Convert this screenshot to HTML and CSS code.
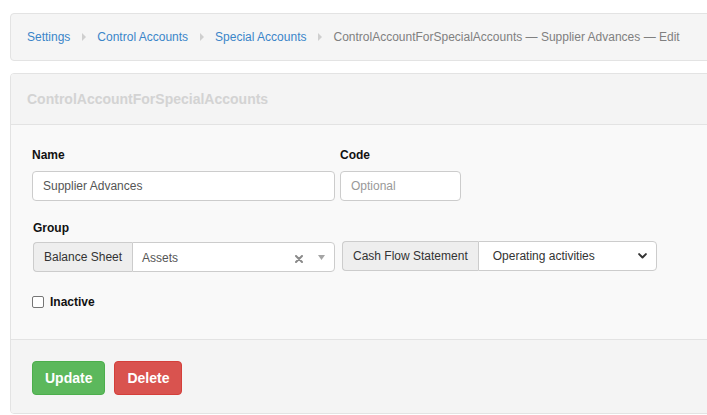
FILE: index.html
```html
<!DOCTYPE html>
<html>
<head>
<meta charset="utf-8">
<link rel="stylesheet" href="styles.css">
</head>
<body>
<div class="page">
  <nav class="breadcrumb">
    <a class="crumb-link">Settings</a>
    <span class="sep"></span>
    <a class="crumb-link">Control Accounts</a>
    <span class="sep"></span>
    <a class="crumb-link">Special Accounts</a>
    <span class="sep"></span>
    <span class="crumb-current">ControlAccountForSpecialAccounts — Supplier Advances — Edit</span>
  </nav>

  <section class="panel">
    <div class="panel-heading">ControlAccountForSpecialAccounts</div>
    <div class="panel-body">
      <div class="row row-top">
        <div class="field field-name">
          <label class="label">Name</label>
          <div class="input">Supplier Advances</div>
        </div>
        <div class="field field-code">
          <label class="label">Code</label>
          <div class="input placeholder">Optional</div>
        </div>
      </div>

      <label class="label label-group">Group</label>
      <div class="row row-groups">
        <div class="input-group group-bs">
          <span class="addon">Balance Sheet</span>
          <div class="select select-assets">
            <span class="select-text">Assets</span>
            <span class="clear">
              <svg width="8" height="8" viewBox="0 0 8 8"><path d="M1 1 L7 7 M7 1 L1 7" stroke="#8a8a8a" stroke-width="2" stroke-linecap="round"/></svg>
            </span>
            <span class="caret">
              <svg width="7" height="5" viewBox="0 0 7 5"><path d="M0 0 H7 L3.5 5 Z" fill="#a5a5a5"/></svg>
            </span>
          </div>
        </div>
        <div class="input-group group-cf">
          <span class="addon">Cash Flow Statement</span>
          <div class="select select-cf">
            <span class="select-text">Operating activities</span>
            <span class="chevron">
              <svg width="9" height="6" viewBox="0 0 9 6"><path d="M1.1 1.1 L4.5 4.5 L7.9 1.1" stroke="#333" stroke-width="2" fill="none" stroke-linecap="round" stroke-linejoin="round"/></svg>
            </span>
          </div>
        </div>
      </div>

      <div class="check-row">
        <span class="checkbox"></span>
        <span class="check-label">Inactive</span>
      </div>
    </div>
    <div class="panel-footer">
      <button class="btn btn-success">Update</button>
      <button class="btn btn-danger">Delete</button>
    </div>
  </section>
</div>
</body>
</html>
```

FILE: styles.css
```css
html, body {
  margin: 0;
  padding: 0;
  overflow: hidden;
  background: #ffffff;
}

body {
  font-family: "Liberation Sans", Arial, sans-serif;
  font-size: 12px;
  color: #333;
}

.page {
  padding: 13px 0 0 10px;
  width: 720px;
}

.breadcrumb {
  display: flex;
  align-items: center;
  background: #f5f5f5;
  border: 1px solid #e3e3e3;
  border-radius: 4px;
  padding: 15px 16px;
  line-height: 16px;
  font-size: 12px;
}

.crumb-link {
  color: #3a85c9;
  text-decoration: none;
}

.crumb-current {
  color: #808080;
}

.sep {
  width: 0;
  height: 0;
  border-top: 4px solid transparent;
  border-bottom: 4px solid transparent;
  border-left: 4px solid #cfcfcf;
  margin: 0 11px 0 12px;
}

.panel {
  margin-top: 12px;
  border: 1px solid #e3e3e3;
  border-radius: 4px;
  background: #f9f9f9;
  overflow: hidden;
}

.panel-heading {
  background: #f4f4f4;
  border-bottom: 1px solid #e3e3e3;
  padding: 16px 16px;
  line-height: 18px;
  font-size: 14px;
  font-weight: bold;
  color: #d3d3d3;
}

.panel-body {
  padding: 22px 21px 29px 21px;
}

.row {
  display: flex;
}

.row-top {
  gap: 5px;
  margin-bottom: 19px;
}

.field-name { width: 303px; }
.field-code { width: 121px; }

.label {
  display: block;
  font-weight: bold;
  color: #111;
  line-height: 17px;
  margin-bottom: 7px;
  font-size: 12px;
}

.label-group {
  padding-left: 1px;
}

.row-groups + .check-row { margin-top: 22px; }

.label + .row-groups { margin-top: -2px; }

.input {
  box-sizing: border-box;
  height: 30px;
  line-height: 28px;
  border: 1px solid #cccccc;
  border-radius: 4px;
  background: #fff;
  padding: 0 10px;
  color: #555;
  font-size: 12px;
}

.placeholder { color: #999; }

.row-groups {
  gap: 7px;
  padding-left: 1px;
}

.input-group {
  display: flex;
  height: 30px;
  box-sizing: border-box;
}

.group-bs { width: 302px; }
.group-cf { width: 315px; margin-top: -1px; }

.addon {
  box-sizing: border-box;
  background: #eeeeee;
  border: 1px solid #cccccc;
  border-right: none;
  border-radius: 4px 0 0 4px;
  padding: 0 10px;
  line-height: 28px;
  color: #333;
  white-space: nowrap;
  font-size: 12px;
}

.select {
  flex: 1;
  display: flex;
  align-items: center;
  box-sizing: border-box;
  background: #fff;
  border: 1px solid #cccccc;
  border-radius: 0 4px 4px 0;
  color: #555;
  font-size: 12px;
}

.select-assets { padding: 1px 8px 0 9px; }
.select-cf { padding: 0 9px 0 14px; color: #333; }

.select-text { flex: 1; }

.clear {
  display: flex;
  margin-right: 15px;
  margin-top: 2px;
}

.caret {
  display: flex;
  margin-right: 1px;
}

.chevron {
  display: flex;
  margin-right: 0;
}

.check-row {
  display: flex;
  align-items: center;
  height: 16px;
  padding-left: 0;
}

.checkbox {
  box-sizing: border-box;
  width: 12px;
  height: 12px;
  border: 1px solid #767676;
  border-radius: 2px;
  background: #fff;
  margin-right: 6px;
}

.check-label {
  font-weight: bold;
  color: #111;
  font-size: 12px;
}

.panel-footer {
  background: #f4f4f4;
  border-top: 1px solid #e3e3e3;
  padding: 21px 21px 18px 21px;
  display: flex;
  gap: 9px;
}

.btn {
  font-family: "Liberation Sans", Arial, sans-serif;
  font-size: 14px;
  font-weight: bold;
  line-height: 20px;
  padding: 6px 12px;
  border-radius: 4px;
  color: #fff;
  border: 1px solid transparent;
  cursor: pointer;
}

.btn-success {
  background: #5cb85c;
  border-color: #4cae4c;
}

.btn-danger {
  background: #d9534f;
  border-color: #d43f3a;
}
```
